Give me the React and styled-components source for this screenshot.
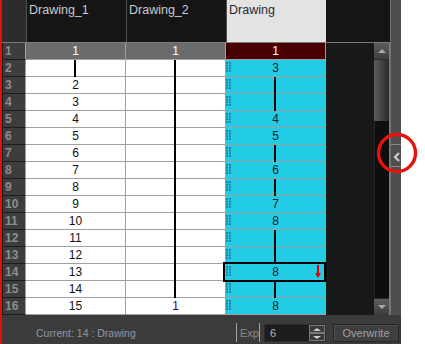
import React from "react";
import styled, { createGlobalStyle, css } from "styled-components";

const GlobalStyle = createGlobalStyle`
  html, body {
    margin: 0;
    padding: 0;
    background: #ffffff;
  }
  body {
    font-family: "Liberation Sans", Arial, sans-serif;
  }
`;

const COLUMNS = [
  {
    name: "Drawing_1",
    cells: ["1", "|", "2", "3", "4", "5", "6", "7", "8", "9", "10", "11", "12", "13", "14", "15"],
  },
  {
    name: "Drawing_2",
    cells: ["1", "|", "|", "|", "|", "|", "|", "|", "|", "|", "|", "|", "|", "|", "|", "1"],
  },
  {
    name: "Drawing",
    active: true,
    cells: ["1", "3", "|", "|", "4", "5", "|", "6", "|", "7", "8", "|", "|", "8", "|", "8"],
  },
];

const ROWS = Array.from({ length: 16 }, (_, i) => i);

const Page = styled.div`
  position: relative;
  display: flex;
  width: 425px;
  height: 344px;
  background: #ffffff;
  overflow: hidden;
`;

const Window = styled.div`
  width: 401px;
  height: 344px;
  box-sizing: border-box;
  border-left: 2px solid #e0110f;
  background: #3b3b3b;
  display: flex;
  flex-direction: column;
`;

const Top = styled.div`
  display: flex;
  height: 315px;
`;

const Sheet = styled.div`
  width: 388px;
  display: flex;
  flex-direction: column;
`;

const HeaderRow = styled.div`
  display: flex;
  height: 42px;
  background: #151515;
`;

const Corner = styled.div`
  width: 24px;
  background: #2c2c2c;
`;

const HeaderCell = styled.div`
  width: 100px;
  box-sizing: border-box;
  border-left: 1px solid #505050;
  padding: 3px 0 0 2px;
  font-size: 12.5px;
  line-height: 15px;
  color: ${(p) => (p.$active ? "#262a36" : "#c6ccd6")};
  background: ${(p) => (p.$active ? "#e3e3e3" : "#151515")};
`;

const Body = styled.div`
  flex: 1;
  display: flex;
  border-top: 1px solid #7c7c7c;
  border-right: 1px solid #7c7c7c;
`;

const Rows = styled.div`
  display: flex;
  flex-direction: column;
`;

const Row = styled.div`
  display: flex;
  height: 17px;
`;

const LabelCell = styled.div`
  width: 24px;
  height: 17px;
  box-sizing: border-box;
  border-left: 1px solid #1c1c1c;
  border-right: 1px solid #a0a0a0;
  border-bottom: 1px solid #1c1c1c;
  background: #3d3d3d;
  padding-left: 2px;
  font-size: 12px;
  font-weight: bold;
  line-height: 16px;
  color: #8d8d8d;
`;

const Cell = styled.div`
  position: relative;
  width: 100px;
  height: 17px;
  box-sizing: border-box;
  border-right: 1px solid #a0a0a0;
  border-bottom: 1px solid #a0a0a0;
  background: ${(p) => p.$bg};
  color: ${(p) => p.$fg};
  font-size: 12px;
  line-height: 17px;
  text-align: center;

  ${(p) =>
    p.$hold &&
    css`
      &::after {
        content: "";
        position: absolute;
        left: 48px;
        top: 0;
        bottom: -1px;
        width: 2px;
        background: #000000;
      }
    `}

  ${(p) =>
    p.$selected &&
    css`
      &::before {
        content: "";
        position: absolute;
        left: -3px;
        right: -1px;
        top: -2px;
        bottom: -2px;
        border: 2px solid #000000;
        z-index: 2;
      }
    `}
`;

const Grip = styled.svg`
  position: absolute;
  left: 0;
  top: 2px;
`;

const MarkArrow = styled.svg`
  position: absolute;
  right: 4px;
  top: 1px;
`;

const Filler = styled.div`
  width: 48px;
  background: #181818;
`;

const Scrollbar = styled.div`
  width: 15px;
  display: flex;
  flex-direction: column;
  background: #0f0f0f;
`;

const ScrollButton = styled.div`
  height: 16px;
  display: flex;
  align-items: center;
  justify-content: center;
  background: linear-gradient(#5d5d5d, #3d3d3d);
  border-top: ${(p) => (p.$down ? "1px solid #2a2a2a" : "none")};
  border-bottom: ${(p) => (p.$down ? "none" : "1px solid #2a2a2a")};

  &::after {
    content: "";
    border-left: 4px solid transparent;
    border-right: 4px solid transparent;
    ${(p) =>
      p.$down
        ? "border-top: 4px solid #a8a8a8;"
        : "border-bottom: 4px solid #a8a8a8;"}
  }
`;

const Thumb = styled.div`
  height: 61px;
  background: linear-gradient(to right, #5e5e5e, #404040 55%, #2c2c2c);
  border-radius: 1px;
`;

const Track = styled.div`
  flex: 1;
  border-left: 1px solid #262626;
  background: #0e0e0e;
`;

const SideStrip = styled.div`
  width: 11px;
  box-sizing: border-box;
  border-left: 1px solid #727272;
  background: #4e4e4e;
  display: flex;
  flex-direction: column;
  align-items: center;
  padding-top: 144px;
`;

const StripLine = styled.div`
  width: 10px;
  height: 1px;
  background: #8a8a8a;
`;

const StripChevron = styled.svg`
  margin: 7px 0 4px;
`;

const BottomBar = styled.div`
  height: 29px;
  display: flex;
  align-items: flex-start;
  padding: 9px 2px 0 0;
  box-sizing: border-box;
  background: #3b3b3b;
`;

const Status = styled.div`
  flex: 1;
  padding-left: 34px;
  font-size: 10.5px;
  line-height: 18px;
  color: #8e99a5;
`;

const Divider = styled.div`
  width: 1px;
  height: 19px;
  margin-top: -1px;
  margin-left: ${(p) => p.$gap || 0}px;
  background: #a2a2a2;
`;

const ExpLabel = styled.div`
  width: 18px;
  margin-left: 3px;
  font-size: 11px;
  line-height: 18px;
  color: #8a8a8a;
`;

const NumberBox = styled.div`
  width: 62px;
  height: 18px;
  margin-left: 4px;
  box-sizing: border-box;
  display: flex;
  background: #1d1d1d;
  border: 1px solid #2c2c2c;
`;

const NumberValue = styled.div`
  flex: 1;
  padding-left: 5px;
  font-size: 11px;
  line-height: 16px;
  color: #b4b4b4;
`;

const Spinner = styled.div`
  width: 16px;
  display: flex;
  flex-direction: column;
`;

const SpinButton = styled.div`
  flex: 1;
  display: flex;
  align-items: center;
  justify-content: center;
  box-sizing: border-box;
  border: 1px solid #7a7a7a;
  background: #3a3a3a;

  &::after {
    content: "";
    border-left: 4px solid transparent;
    border-right: 4px solid transparent;
    ${(p) =>
      p.$down
        ? "border-top: 3px solid #cfcfcf;"
        : "border-bottom: 3px solid #cfcfcf;"}
  }
`;

const OverwriteButton = styled.div`
  width: 66px;
  height: 18px;
  margin-left: 7px;
  box-sizing: border-box;
  border: 1px solid #262626;
  box-shadow: inset 1px 1px 0 #4e4e4e;
  background: #3f3f3f;
  font-size: 11px;
  line-height: 16px;
  text-align: center;
  color: #a0a0a0;
`;

const Highlight = styled.svg`
  position: absolute;
  left: 376px;
  top: 132px;
`;

function GripDots({ color }) {
  const dots = [];
  for (let r = 0; r < 4; r++) {
    for (let c = 0; c < 2; c++) {
      dots.push(<rect key={`${r}-${c}`} x={c * 3} y={r * 2.7} width="2" height="1.8" fill={color} />);
    }
  }
  return (
    <Grip width="5" height="11" viewBox="0 0 5 11">
      {dots}
    </Grip>
  );
}

function SheetCell({ column, value, row }) {
  const hold = value === "|";
  const first = row === 0;
  let bg = "#ffffff";
  let fg = "#101010";
  if (column.active) {
    bg = first ? "#4a0000" : "#22cce4";
    fg = first ? "#ffffff" : "#14202c";
  } else if (first) {
    bg = "#6b6b6b";
    fg = "#ffffff";
  }
  if (!column.active && row === 15 && column.name === "Drawing_2") fg = "#3a0052";
  const selected = column.active && row === 13;
  return (
    <Cell $bg={bg} $fg={fg} $hold={hold} $selected={selected}>
      {column.active && <GripDots color={first ? "#2e0000" : "#2a7d9c"} />}
      {hold ? "" : value}
      {selected && (
        <MarkArrow width="6" height="14" viewBox="0 0 6 14">
          <rect x="2" y="0" width="2" height="10" fill="#e00000" />
          <polygon points="0,8 6,8 3,13" fill="#e00000" />
        </MarkArrow>
      )}
    </Cell>
  );
}

export default function App() {
  return (
    <Page>
      <GlobalStyle />
      <Window>
        <Top>
          <Sheet>
            <HeaderRow>
              <Corner />
              {COLUMNS.map((col) => (
                <HeaderCell key={col.name} $active={col.active}>
                  {col.name}
                </HeaderCell>
              ))}
            </HeaderRow>
            <Body>
              <Rows>
                {ROWS.map((r) => (
                  <Row key={r}>
                    <LabelCell>{r + 1}</LabelCell>
                    {COLUMNS.map((col) => (
                      <SheetCell key={col.name} column={col} value={col.cells[r]} row={r} />
                    ))}
                  </Row>
                ))}
              </Rows>
              <Filler />
              <Scrollbar>
                <ScrollButton />
                <Thumb />
                <Track />
                <ScrollButton $down />
              </Scrollbar>
            </Body>
          </Sheet>
          <SideStrip>
            <StripLine />
            <StripChevron width="7" height="10" viewBox="0 0 7 10">
              <polyline points="6,1 2,5 6,9" fill="none" stroke="#cdcdcd" strokeWidth="2.2" />
            </StripChevron>
            <StripLine />
          </SideStrip>
        </Top>
        <BottomBar>
          <Status>Current: 14 : Drawing</Status>
          <Divider />
          <ExpLabel>Exp</ExpLabel>
          <Divider $gap={1} />
          <NumberBox>
            <NumberValue>6</NumberValue>
            <Spinner>
              <SpinButton />
              <SpinButton $down />
            </Spinner>
          </NumberBox>
          <OverwriteButton>Overwrite</OverwriteButton>
        </BottomBar>
      </Window>
      <Highlight width="42" height="42" viewBox="0 0 42 42">
        <circle cx="21" cy="21" r="18.5" fill="none" stroke="#e8120f" strokeWidth="3.4" />
      </Highlight>
    </Page>
  );
}
